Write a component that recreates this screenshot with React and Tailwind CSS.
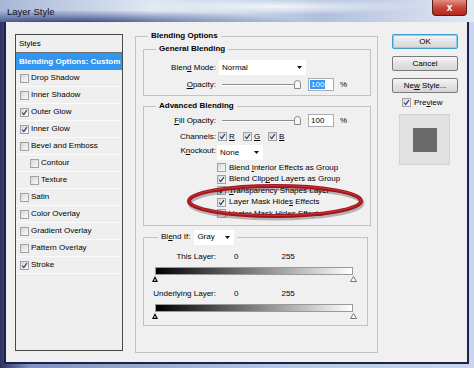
import React from "react";

const font = "font-['Liberation_Sans',Arial,sans-serif]";

function Check({ on }) {
  return (
    <span className="flex h-[9px] w-[9px] shrink-0 items-center justify-center border border-[#a2a2a2] bg-[linear-gradient(135deg,#d6d6d6,#fbfbfb)]">
      {on && (
        <svg viewBox="0 0 7 7" className="h-[7px] w-[7px]">
          <path d="M1.2 3.7 L2.8 5.6 L5.9 1.1" fill="none" stroke="#27346f" strokeWidth="1.1" />
        </svg>
      )}
    </span>
  );
}

function Arrow() {
  return (
    <svg width="5" height="3" viewBox="0 0 5 3">
      <path d="M0 0H5L2.5 3Z" fill="#111" />
    </svg>
  );
}

function Select({ value, className = "" }) {
  return (
    <div className={`flex items-center justify-between bg-white pl-[3px] pr-[4px] ${className}`}>
      <span>{value}</span>
      <Arrow />
    </div>
  );
}

function Slider() {
  return (
    <div className="ml-[6px] flex items-center">
      <div className="h-[2px] w-[72px] border-t border-b border-t-[#8e8e8e] border-b-white" />
      <svg width="7" height="9" viewBox="0 0 7 9">
        <path d="M0.5 8.5 V3.2 Q0.5 0.5 3.5 0.5 Q6.5 0.5 6.5 3.2 V8.5 Z" fill="#f6f6f6" stroke="#8a8a8a" />
      </svg>
    </div>
  );
}

function PctRow({ label, value, selected }) {
  return (
    <div className="flex h-[13px] items-center">
      <span className="w-[72px] text-right">{label}</span>
      <Slider />
      <div className="ml-[7px] flex h-[13px] w-[26px] items-center border border-[#abadb3] bg-white pl-[1px]">
        <span className={selected ? "bg-[#3399ff] px-px leading-[9px] text-white" : "px-px"}>{value}</span>
      </div>
      <span className="ml-[6px]">%</span>
    </div>
  );
}

function Tri({ dark }) {
  return dark ? (
    <svg width="6" height="6" viewBox="0 0 6 6">
      <path d="M3 0 L6 6 H0 Z" fill="#000" />
      <rect x="2.2" y="3.4" width="1.6" height="1.4" fill="#fff" />
    </svg>
  ) : (
    <svg width="7" height="6" viewBox="0 0 7 6">
      <path d="M3.5 0.5 L6.5 5.5 H0.5 Z" fill="#fff" stroke="#777" />
    </svg>
  );
}

function GradBar() {
  return (
    <div className="ml-[11px] h-[8px] w-[198px] border border-[#9a9a9a] bg-[linear-gradient(90deg,#000,#fff)]" />
  );
}

const styles = [
  ["Drop Shadow", false, 0],
  ["Inner Shadow", false, 0],
  ["Outer Glow", true, 0],
  ["Inner Glow", true, 0],
  ["Bevel and Emboss", false, 0],
  ["Contour", false, 1],
  ["Texture", false, 1],
  ["Satin", false, 0],
  ["Color Overlay", false, 0],
  ["Gradient Overlay", false, 0],
  ["Pattern Overlay", false, 0],
  ["Stroke", true, 0],
];

const options = [
  [<>Blend <u>I</u>nterior Effects as Group</>, false],
  [<>Blend Clip<u>p</u>ed Layers as Group</>, true],
  [<><u>T</u>ransparency Shapes Layer</>, true],
  [<>Layer Mask Hide<u>s</u> Effects</>, true],
  [<>Vector Mask <u>H</u>ides Effects</>, false],
];

function Button({ children, main }) {
  return (
    <div
      className={`flex h-[15px] w-[66px] items-center justify-center rounded-[2px] border bg-[linear-gradient(#f6f6f6,#e3e3e3_50%,#d6d6d6)] ${
        main ? "border-[#3c9fd0] shadow-[inset_0_0_0_1px_#7fd3f3]" : "border-[#7a7a7a]"
      }`}
    >
      {children}
    </div>
  );
}

export default function App() {
  return (
    <div
      className={`${font} relative flex h-[368px] w-[474px] flex-col overflow-hidden bg-[linear-gradient(90deg,#2e335f,#7f91bd_6%,#b9c7e2_60%,#c9d6ec)] text-[8px] leading-[10px] text-black`}
    >
      <div className="flex h-[22px] items-start justify-between bg-[radial-gradient(ellipse_at_14%_110%,#25336a_0%,rgba(60,80,140,0.55)_22%,transparent_42%),radial-gradient(ellipse_at_58%_30%,#f2f6fb_0%,transparent_38%),linear-gradient(90deg,#a7b7d6,#dfe7f3_32%,#b0bfdc_68%,#e2e9f4)]">
        <span className="ml-[7px] mt-[7px] text-[9.5px] leading-[10px] text-[#111]">Layer Style</span>
        <div className="mr-[7px] flex h-[16px] w-[35px] items-center justify-center rounded-b-[4px] border border-t-0 border-[#5c1d17] bg-[linear-gradient(#e08f82,#c8473a_50%,#b3281c)] text-[10px] font-bold text-white">
          x
        </div>
      </div>

      <div className="mb-[4px] ml-[4px] mr-[5px] flex flex-1 items-start border-x-2 border-b-2 border-[#1c2150] bg-[#f0f0f0] pl-[9px]">
        {/* styles list */}
        <div className="mt-[12px] h-[317px] w-[108px] border border-[#4a4a4a] bg-[#efefef]">
          <div className="flex h-[18px] items-center border-b border-[#6a6a6a] pl-[3px]">Styles</div>
          <div className="flex h-[17px] items-center bg-[#3296f0] pl-[3px] font-bold text-white">
            Blending Options: Custom
          </div>
          {styles.map(([name, on, indent]) => (
            <div
              key={name}
              className={`flex h-[17px] items-center border-b border-[#fbfbfb] ${indent ? "pl-[14px]" : "pl-[4px]"}`}
            >
              <Check on={on} />
              <span className="ml-[2px]">{name}</span>
            </div>
          ))}
        </div>

        {/* blending options */}
        <fieldset className="ml-[12px] mt-[9px] h-[322px] w-[243px] border border-[#c3c3c3]">
          <legend className="ml-[12px] px-[3px] font-bold">Blending Options</legend>

          <fieldset className="ml-[7px] mt-[3px] w-[228px] border border-[#c3c3c3] pb-[4px]">
            <legend className="ml-[12px] px-[3px] font-bold">General Blending</legend>
            <div className="mt-[6px] flex h-[15px] items-center">
              <span className="w-[72px] text-right">
                Blen<u>d</u> Mode:
              </span>
              <Select value="Normal" className="ml-[3px] h-[15px] w-[87px]" />
            </div>
            <div className="mt-[3px]">
              <PctRow label={<><u>O</u>pacity:</>} value="100" selected />
            </div>
          </fieldset>

          <fieldset className="ml-[7px] mt-[5px] w-[228px] border border-[#c3c3c3] pb-[5px]">
            <legend className="ml-[12px] px-[3px] font-bold">Advanced Blending</legend>
            <div className="mt-[3px]">
              <PctRow label={<><u>F</u>ill Opacity:</>} value="100" />
            </div>
            <div className="mt-[5px] flex h-[9px] items-center">
              <span className="w-[72px] text-right">Channels:</span>
              <div className="ml-[2px] flex">
                {["R", "G", "B"].map((c) => (
                  <div key={c} className="flex w-[25px] items-center">
                    <Check on />
                    <u className="ml-[2px]">{c}</u>
                  </div>
                ))}
              </div>
            </div>
            <div className="mt-[4px] flex h-[15px] items-center">
              <span className="w-[72px] self-start pt-[1px] text-right">
                K<u>n</u>ockout:
              </span>
              <Select value="None" className="ml-[1px] h-[15px] w-[46px]" />
            </div>
            <div className="mt-[2px] ml-[73px]">
              {options.map(([label, on], i) => (
                <div key={i} className="flex h-[11.5px] items-center">
                  <Check on={on} />
                  <span className="ml-[3px]">{label}</span>
                </div>
              ))}
            </div>
          </fieldset>

          <fieldset className="ml-[7px] mt-[4px] w-[225px] border border-[#c3c3c3] pb-[6px]">
            <legend className="ml-[14px] flex items-center px-[3px]">
              <span>
                Bl<u>e</u>nd If:
              </span>
              <Select value="Gray" className="ml-[4px] h-[15px] w-[40px]" />
            </legend>
            <div className="mt-[7px] flex h-[10px] items-center">
              <span className="w-[72px] text-right">This Layer:</span>
              <span className="ml-[18px]">0</span>
              <span className="ml-[43px]">255</span>
            </div>
            <div className="mt-[5px]">
              <GradBar />
            </div>
            <div className="ml-[8px] mt-[1px] flex w-[205px] justify-between">
              <Tri dark />
              <Tri />
            </div>
            <div className="mt-[7px] flex h-[10px] items-center">
              <span className="w-[72px] text-right">Underlying Layer:</span>
              <span className="ml-[18px]">0</span>
              <span className="ml-[43px]">255</span>
            </div>
            <div className="mt-[5px]">
              <GradBar />
            </div>
            <div className="ml-[8px] mt-[1px] flex w-[205px] justify-between">
              <Tri dark />
              <Tri />
            </div>
          </fieldset>
        </fieldset>

        {/* buttons */}
        <div className="ml-[14px] mt-[12px] flex w-[66px] flex-col">
          <Button main>OK</Button>
          <div className="mt-[7px]">
            <Button>Cancel</Button>
          </div>
          <div className="mt-[7px]">
            <Button>
              Ne<u>w</u>&nbsp;Style...
            </Button>
          </div>
          <div className="mt-[5px] flex h-[9px] items-center pl-[10px]">
            <Check on />
            <span className="ml-[3px]">
              Pre<u>v</u>iew
            </span>
          </div>
          <div className="ml-[7px] mt-[7px] flex h-[51px] w-[51px] items-center justify-center border border-[#d2d2d2] bg-[#e2e2e2]">
            <div className="h-[24px] w-[24px] bg-[#6a6a6a]" />
          </div>
        </div>
      </div>

      <svg className="pointer-events-none absolute left-0 top-0" width="474" height="368" viewBox="0 0 474 368">
        <ellipse cx="276" cy="203" rx="86" ry="15" fill="none" stroke="rgba(0,0,0,0.25)" strokeWidth="5" />
        <ellipse cx="275" cy="201" rx="86" ry="15" fill="none" stroke="#a3131b" strokeWidth="4" />
        <ellipse cx="275" cy="200.5" rx="86" ry="15" fill="none" stroke="rgba(230,90,90,0.5)" strokeWidth="1" />
      </svg>
    </div>
  );
}
